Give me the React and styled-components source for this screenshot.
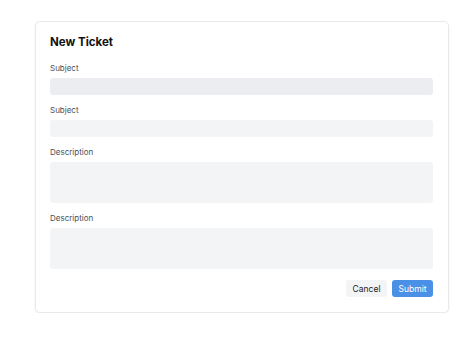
import styled, { createGlobalStyle } from 'styled-components';

const GlobalStyle = createGlobalStyle`
  body {
    margin: 0;
    background: #ffffff;
    font-family: Inter, "Liberation Sans", sans-serif;
  }
`;

const Page = styled.div`
  padding: 21px 0 0 35px;
`;

const Card = styled.div`
  width: 414px;
  box-sizing: border-box;
  padding: 14px 15px 15px 14px;
  background: #ffffff;
  border: 1px solid #e8e9ec;
  border-radius: 5px;
  box-shadow: 0 1px 3px rgba(0, 0, 0, 0.06);
  display: flex;
  flex-direction: column;
`;

const Title = styled.h2`
  margin: 0 0 15px 0;
  font-size: 11.5px;
  line-height: 12px;
  font-weight: 700;
  color: #111111;
`;

const Field = styled.div`
  display: flex;
  flex-direction: column;
  margin-bottom: 10px;
`;

const Label = styled.label`
  font-size: 8px;
  line-height: 10px;
  color: #4b5058;
  margin-bottom: 5px;
`;

const Input = styled.div`
  height: ${(p) => (p.$tall ? '41px' : '17px')};
  border-radius: 3px;
  background: ${(p) => (p.$active ? '#ecedf0' : '#f3f4f6')};
`;

const Actions = styled.div`
  display: flex;
  justify-content: flex-end;
  gap: 5px;
  margin-top: 1px;
`;

const Button = styled.button`
  width: 41px;
  height: 17px;
  padding: 0;
  border: none;
  border-radius: 3px;
  font-family: inherit;
  font-size: 8.5px;
  background: ${(p) => (p.$primary ? '#4a90e6' : '#f3f4f6')};
  color: ${(p) => (p.$primary ? '#ffffff' : '#222222')};
`;

const fields = [
  { label: 'Subject', active: true },
  { label: 'Subject' },
  { label: 'Description', tall: true },
  { label: 'Description', tall: true },
];

export default function App() {
  return (
    <Page>
      <GlobalStyle />
      <Card>
        <Title>New Ticket</Title>
        {fields.map((f, i) => (
          <Field key={i}>
            <Label>{f.label}</Label>
            <Input $tall={f.tall} $active={f.active} />
          </Field>
        ))}
        <Actions>
          <Button>Cancel</Button>
          <Button $primary>Submit</Button>
        </Actions>
      </Card>
    </Page>
  );
}
